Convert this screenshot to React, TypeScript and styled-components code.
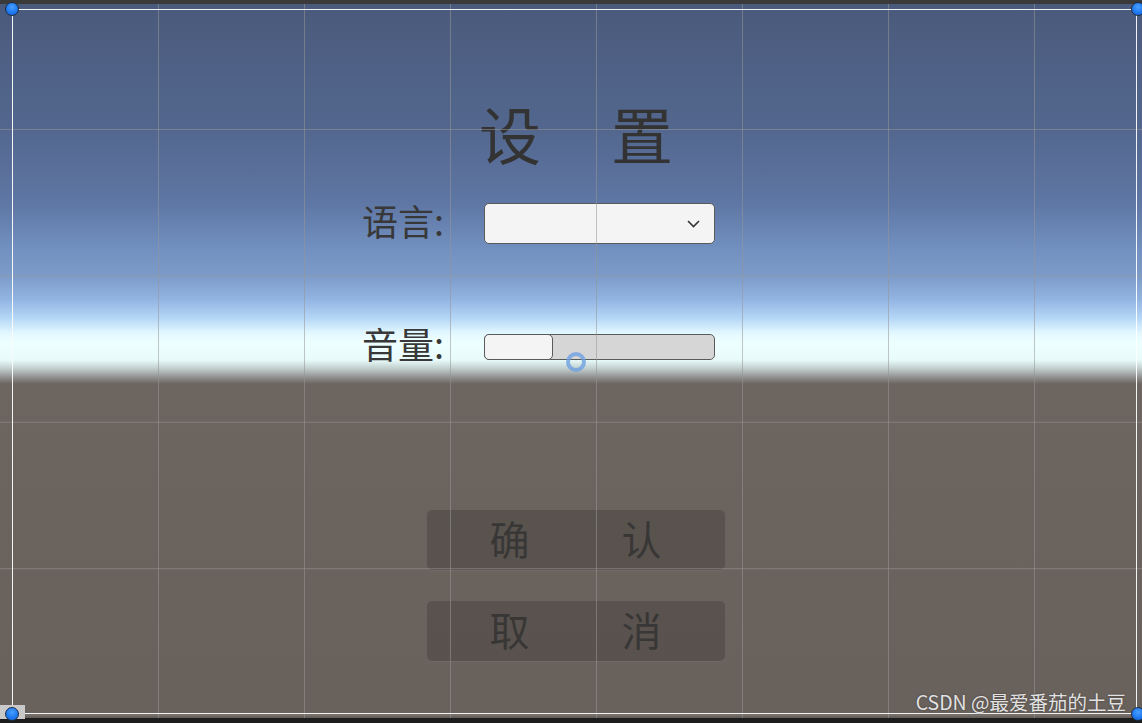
import { createGlobalStyle, styled } from 'styled-components';

const GlobalStyle = createGlobalStyle`
  html, body {
    margin: 0;
    padding: 0;
    background: #222;
  }
  body {
    font-family: "Noto Sans CJK SC", "Noto Sans", sans-serif;
  }
`;

const Page = styled.div`
  display: flex;
  flex-direction: column;
  width: 100vw;
  height: 100vh;
  overflow: hidden;
`;

const TopBar = styled.div`
  height: 4px;
  background: #3a3a3a;
`;

const BottomBar = styled.div`
  height: 5px;
  background: #1c1c1c;
`;

const Scene = styled.div`
  position: relative;
  flex: 1;
  background: linear-gradient(
    180deg,
    #4a5a7c 0px,
    #53678e 126px,
    #5f77a5 200px,
    #7291c0 246px,
    #7d9bc8 272px,
    #93b5e2 296px,
    #b4d6f6 314px,
    #e0f6ff 328px,
    #eeffff 338px,
    #e8fbfa 356px,
    #c4d2d0 364px,
    #98999a 372px,
    #6d655f 380px,
    #6b635e 500px,
    #69615c 100%
  );
`;

// scene grid, drawn above the canvas like the editor does
const Grid = styled.div`
  position: absolute;
  inset: 0;
  pointer-events: none;
  background-image:
    linear-gradient(to right, rgba(150, 150, 150, 0.55) 1px, transparent 1px),
    linear-gradient(to bottom, rgba(150, 150, 150, 0.55) 1px, transparent 1px);
  background-size: 146px 100%, 100% 146.4px;
  background-position: 12px 0, 0 125px;
`;

const Frame = styled.div`
  position: absolute;
  left: 12px;
  top: 5px;
  width: 1125px;
  height: 705px;
  border: 1.5px solid rgba(255, 255, 255, 0.92);
  box-sizing: border-box;
  pointer-events: none;
`;

const Handle = styled.div<{ $x: number; $y: number }>`
  position: absolute;
  left: ${(p) => p.$x - 7}px;
  top: ${(p) => p.$y - 7}px;
  width: 14px;
  height: 14px;
  border-radius: 50%;
  box-sizing: border-box;
  border: 1.5px solid #1d2c44;
  background: radial-gradient(circle at 50% 35%, #4aa0ff 0%, #1f7af0 55%, #1660d0 100%);
`;

const PivotTag = styled.div`
  position: absolute;
  left: 0;
  top: 701px;
  width: 25px;
  height: 14px;
  background: #c9c9c9;
`;

const Pivot = styled.div`
  position: absolute;
  left: 566px;
  top: 348px;
  width: 20px;
  height: 20px;
  border-radius: 50%;
  box-sizing: border-box;
  border: 4px solid rgba(110, 160, 225, 0.8);
  filter: blur(0.6px);
`;

const Panel = styled.div`
  display: flex;
  flex-direction: column;
  padding-top: 98px;
  color: #323232;
`;

const Title = styled.h1`
  display: flex;
  justify-content: center;
  gap: 70px;
  margin: 0;
  padding-left: 10px;
  font-size: 62px;
  line-height: 62px;
  height: 62px;
  font-weight: 400;
  color: #333;
`;

const Row = styled.div<{ $top: number }>`
  display: flex;
  align-items: center;
  height: 41px;
  margin-top: ${(p) => p.$top}px;
  padding-left: 362px;
`;

const Label = styled.label`
  width: 122px;
  font-size: 36px;
  line-height: 41px;
  margin-top: -6px;
  color: #383838;
`;

const Select = styled.div`
  display: flex;
  align-items: center;
  justify-content: flex-end;
  width: 231px;
  height: 41px;
  box-sizing: border-box;
  padding-right: 14px;
  background: #f4f4f4;
  border: 1px solid #5a5a5a;
  border-radius: 5px;
`;

const Track = styled.div`
  display: flex;
  width: 231px;
  height: 26px;
  margin-top: 1px;
  box-sizing: border-box;
  background: #d6d6d6;
  border: 1px solid #5a5a5a;
  border-radius: 5px;
`;

const Fill = styled.div`
  box-sizing: border-box;
  margin: -1px 0 0 -1px;
  height: 26px;
  background: #f4f4f4;
  border: 1px solid #5a5a5a;
  border-radius: 5px;
`;

const Buttons = styled.div`
  display: flex;
  flex-direction: column;
  align-items: center;
  gap: 31px;
  margin-top: 143px;
  padding-left: 9px;
`;

const Button = styled.button`
  display: flex;
  justify-content: center;
  align-items: center;
  gap: 92px;
  width: 298px;
  height: 60px;
  padding: 0 0 4px;
  border: none;
  border-radius: 5px;
  background: rgba(0, 0, 0, 0.16);
  box-shadow: 0 1px 0 rgba(255, 255, 255, 0.05);
  font-family: "Noto Sans CJK SC", "Noto Sans", sans-serif;
  font-size: 40px;
  line-height: 56px;
  color: rgba(50, 50, 50, 0.85);
`;

const Watermark = styled.div`
  position: absolute;
  right: 16px;
  bottom: 3px;
  font-size: 19.5px;
  line-height: 26px;
  color: #e2e2e2;
  text-shadow: 0 0 2px rgba(0, 0, 0, 0.45);
  white-space: nowrap;
`;

const Chevron = () => (
  <svg width="13" height="8" viewBox="0 0 13 8">
    <polyline points="1,1 6.5,6.5 12,1" fill="none" stroke="#333" strokeWidth="1.6" />
  </svg>
);

const corners: [number, number][] = [
  [12, 5],
  [1138, 5],
  [12, 710],
  [1138, 710],
];

export default function App() {
  const volume = 0.3;

  return (
    <Page>
      <GlobalStyle />
      <TopBar />
      <Scene>
        <Panel>
          <Title>
            <span>设</span>
            <span>置</span>
          </Title>
          <Row $top={39}>
            <Label>语言:</Label>
            <Select>
              <Chevron />
            </Select>
          </Row>
          <Row $top={82}>
            <Label>音量:</Label>
            <Track>
              <Fill style={{ width: `${volume * 100}%` }} />
            </Track>
          </Row>
          <Buttons>
            <Button>
              <span>确</span>
              <span>认</span>
            </Button>
            <Button>
              <span>取</span>
              <span>消</span>
            </Button>
          </Buttons>
        </Panel>
        <Grid />
        <Frame />
        <Pivot />
        <PivotTag />
        {corners.map(([x, y]) => (
          <Handle key={`${x}-${y}`} $x={x} $y={y} />
        ))}
        <Watermark>CSDN @最爱番茄的土豆</Watermark>
      </Scene>
      <BottomBar />
    </Page>
  );
}
